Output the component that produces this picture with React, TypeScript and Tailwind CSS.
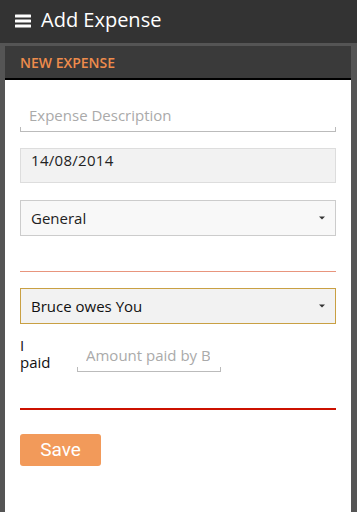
import React from "react";

export default function App() {
  const font = { fontFamily: '"Open Sans", "Noto Sans", sans-serif' };
  return (
    <div className="w-[357px] h-[512px] bg-[#555555] flex flex-col overflow-hidden" style={font}>
      <div className="h-[43px] bg-[#333333] flex items-center pl-[15px] shrink-0">
        <svg width="16" height="14" viewBox="0 0 16 14" className="mt-[-2px]">
          <rect x="0" y="0.5" width="16" height="3" rx="0.5" fill="#fff" />
          <rect x="0" y="5.5" width="16" height="3" rx="0.5" fill="#fff" />
          <rect x="0" y="10.5" width="16" height="3" rx="0.5" fill="#fff" />
        </svg>
        <span className="ml-[10px] text-white text-[20px] leading-none mt-[-3px]">Add Expense</span>
      </div>
      <div className="flex-1 pt-[3px] pl-[5px] pr-[6px] flex flex-col">
        <div className="h-[34px] bg-[#3a3a3a] flex items-center pl-[15px] border-b-2 border-black shrink-0">
          <span className="text-[#ee8c4c] font-semibold text-[14px]">NEW EXPENSE</span>
        </div>
        <div className="flex-1 bg-white px-[15px] pt-[22px]">
          <div className="h-[30px] flex items-end">
            <div className="w-full h-[5px] border-b border-x border-[#bbbbbb] relative">
              <span className="absolute left-[8px] bottom-[5px] text-[15px] text-[#aaaaaa] whitespace-nowrap">Expense Description</span>
            </div>
          </div>
          <div className="mt-[16px] h-[35px] bg-[#f2f2f2] border border-[#dddddd] flex items-start pl-[10px]">
            <span className="text-[15px] text-[#222] tracking-[0.3px]">14/08/2014</span>
          </div>
          <div className="mt-[17px] h-[36px] bg-[#f8f8f8] border border-[#cccccc] flex items-center justify-between pl-[10px] pr-[10px]">
            <span className="text-[15px] text-[#222]">General</span>
            <svg width="6" height="4" viewBox="0 0 6 4"><path d="M0 0.5 L6 0.5 L3 3.5 Z" fill="#333" /></svg>
          </div>
          <div className="mt-[35px] h-px bg-[#e8957d]" />
          <div className="mt-[16px] h-[36px] bg-[#f2f2f2] border border-[#c9a043] flex items-center justify-between pl-[10px] pr-[10px]">
            <span className="text-[15px] text-[#111]">Bruce owes You</span>
            <svg width="6" height="4" viewBox="0 0 6 4"><path d="M0 0.5 L6 0.5 L3 3.5 Z" fill="#333" /></svg>
          </div>
          <div className="mt-[13px] flex items-start">
            <div className="w-[57px] text-[15px] leading-[17px] text-[#111]">
              <div>I</div>
              <div>paid</div>
            </div>
            <div className="w-[144px] h-[5px] border-b border-x border-[#bbbbbb] relative mt-[30px]">
              <div className="absolute left-[8px] bottom-[4px] w-[124px] overflow-hidden">
                <span className="text-[15px] text-[#aaaaaa] whitespace-nowrap">Amount paid by Bruce</span>
              </div>
            </div>
          </div>
          <div className="mt-[36px] h-[2px] bg-[#cc1100]" />
          <button className="mt-[24px] w-[81px] h-[32px] bg-[#f29a5a] rounded-[3px] text-white text-[19px] flex items-center justify-center" style={{ fontFamily: 'Roboto, "Noto Sans", sans-serif' }}>
            Save
          </button>
        </div>
      </div>
    </div>
  );
}
